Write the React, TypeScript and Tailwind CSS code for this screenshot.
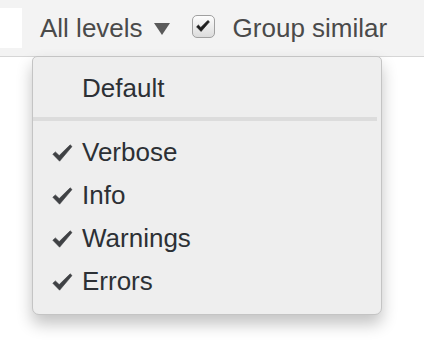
import React from 'react';

const Check: React.FC = () => (
  <svg width="21" height="18" viewBox="0 0 21 18" className="shrink-0">
    <path d="M0.8 10.2 L3.4 7.9 L7.2 11.6 L18.2 0.8 L20 2.6 L7.6 17.2 Z" fill="#3f4144" stroke="#3f4144" strokeWidth="0.6" strokeLinejoin="round" />
  </svg>
);

const levels = ['Verbose', 'Info', 'Warnings', 'Errors'];

const App: React.FC = () => {
  return (
    <div className="relative w-[424px] h-[356px] bg-white overflow-hidden font-['Liberation_Sans',Arial,sans-serif]">
      {/* Toolbar */}
      <div className="flex items-center h-[57px] bg-[#f3f3f3] border-b border-[#d6d6d6]">
        <div className="w-[22px] h-[40px] bg-white" />
        <button className="flex items-center ml-[18px] text-[26px] leading-none text-[#4a4a4a]">
          <span>All levels</span>
          <span className="ml-[11px] w-0 h-0 border-l-[8px] border-r-[8px] border-t-[12px] border-l-transparent border-r-transparent border-t-[#5a5a5a] mt-[1px]" />
        </button>
        <div className="ml-[22px] w-[23px] h-[23px] rounded-[5px] border border-[#a0a0a0] bg-gradient-to-b from-[#fdfdfd] to-[#dcdcdc] flex items-center justify-center mb-[4px] shrink-0">
          <svg width="14" height="12" viewBox="0 0 21 18">
            <path d="M0.8 10.2 L3.6 7.6 L7.2 11.2 L17.8 0.6 L20.2 2.8 L7.6 17.2 Z" fill="#1e1e1e" stroke="#1e1e1e" strokeWidth="1" strokeLinejoin="round" />
          </svg>
        </div>
        <span className="ml-[18px] text-[26px] leading-none text-[#4a4a4a]">Group similar</span>
      </div>

      {/* Dropdown menu */}
      <div className="absolute left-[32px] top-[56px] w-[350px] rounded-b-[7px] rounded-t-[5px] border border-[#c4c4c4] bg-[#eeeeee] pt-[10px] pb-[11px] shadow-[0_9px_16px_rgba(0,0,0,0.24)] text-[26px] leading-[43px] text-[#2c3035]">
        <div className="pl-[49px]">Default</div>
        <div className="mt-[7px] mb-[10px] h-[4px] bg-[#dcdcdc] mr-[4px]" />
        {levels.map((l) => (
          <div key={l} className="flex items-center pl-[19px]">
            <Check />
            <span className="ml-[9px]">{l}</span>
          </div>
        ))}
      </div>
    </div>
  );
};

export default App;
